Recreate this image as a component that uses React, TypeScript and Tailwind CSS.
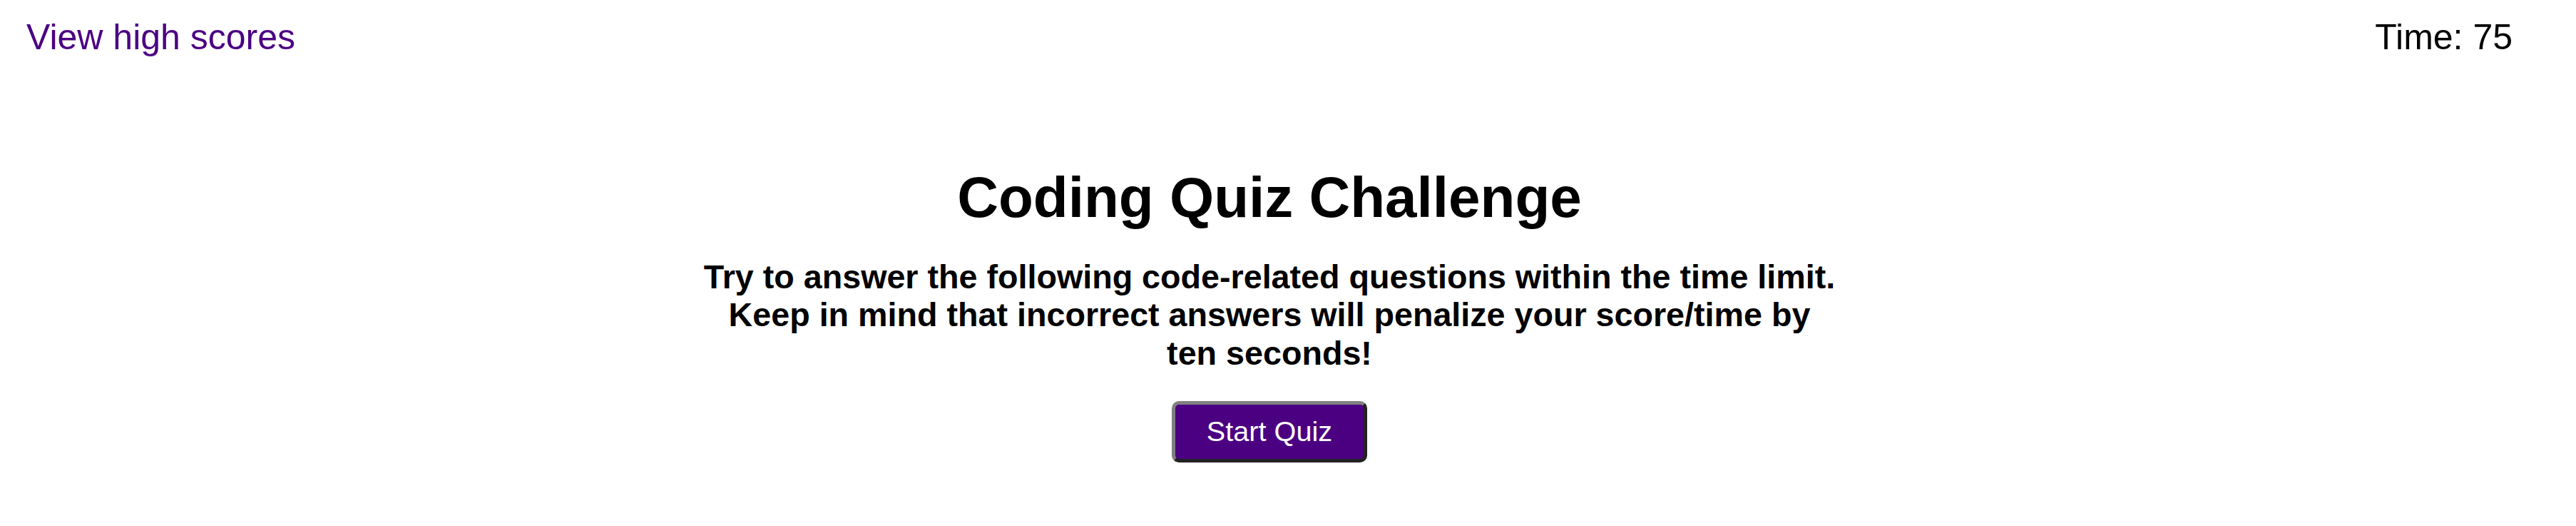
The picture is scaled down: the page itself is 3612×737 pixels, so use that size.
import React from "react";

export default function App() {
    return (
        <div className="w-[3560px] min-h-[737px] bg-white text-black font-['Liberation_Sans',Arial,sans-serif]">
            <header className="flex justify-between items-start px-[37px] pt-[24px] text-[50px] leading-[1.15]">
                <a href="#" className="text-[#4b0082]">View high scores</a>
                <div>Time: 75</div>
            </header>

            <main className="flex flex-col items-center mt-[149px]">
                <h1 className="text-[80px] font-bold leading-[1.15]">Coding Quiz Challenge</h1>
                <p className="mt-[39px] w-[1592px] text-center text-[46.67px] font-bold leading-[1.15]">
                    Try to answer the following code-related questions within the time limit. Keep in mind that incorrect answers will penalize your score/time by ten seconds!
                </p>
                <button className="mt-[39px] px-[44px] py-[15.5px] text-[39.67px] leading-[1.15] text-white bg-[#4b0082] rounded-[10px] border-[5px] border-t-[#808080] border-l-[#808080] border-r-[#222222] border-b-[#222222]">
                    Start Quiz
                </button>
            </main>
        </div>
    );
}
